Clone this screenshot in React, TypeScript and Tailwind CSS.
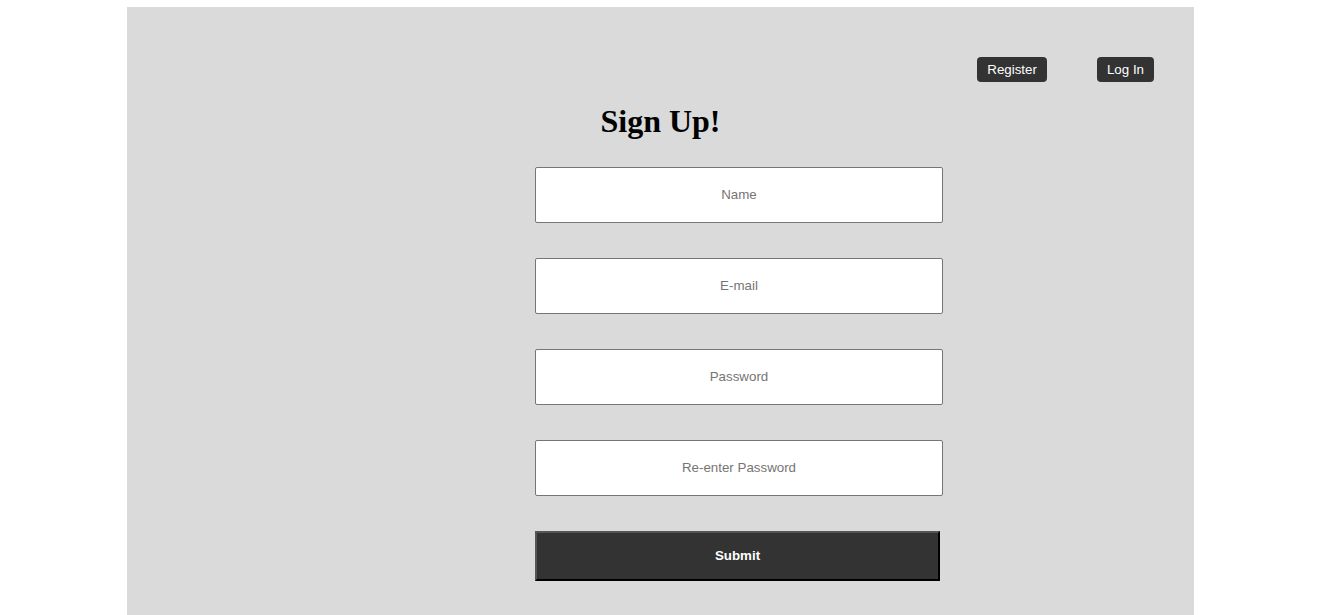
export default function App() {
  const fields = ["Name", "E-mail", "Password", "Re-enter Password"];
  return (
    <div className="w-[1328px] h-[615px] bg-white overflow-hidden" style={{ fontFamily: '"Liberation Sans", Arial, sans-serif' }}>
      <div className="ml-[127px] mt-[7px] w-[1067px] h-[608px] bg-[#dadada] pt-[50px]">
        <div className="flex justify-end gap-[50px] pr-[40px]">
          <button className="h-[25px] px-[10px] rounded-[4px] bg-[#333333] text-white text-[13.33px] leading-[25px]">Register</button>
          <button className="h-[25px] px-[10px] rounded-[4px] bg-[#333333] text-white text-[13.33px] leading-[25px]">Log In</button>
        </div>
        <h1
          className="mt-[21px] text-center text-[32px] font-bold leading-[37px] text-black"
          style={{ fontFamily: '"Liberation Serif", "Times New Roman", serif' }}
        >
          Sign Up!
        </h1>
        <div className="ml-[408px] mt-[27px] flex flex-col gap-[35px] w-[408px]">
          {fields.map((f) => (
            <input
              key={f}
              placeholder={f}
              className="w-[408px] h-[56px] pb-[2px] bg-white border border-[#767676] rounded-[2px] text-center text-[13.33px] placeholder:text-[#757575] outline-none"
            />
          ))}
          <button className="w-[405px] h-[50px] bg-[#333333] text-white font-bold text-[13.33px] border-2 border-t-[#555555] border-l-[#555555] border-b-black border-r-black">
            Submit
          </button>
        </div>
      </div>
    </div>
  );
}
